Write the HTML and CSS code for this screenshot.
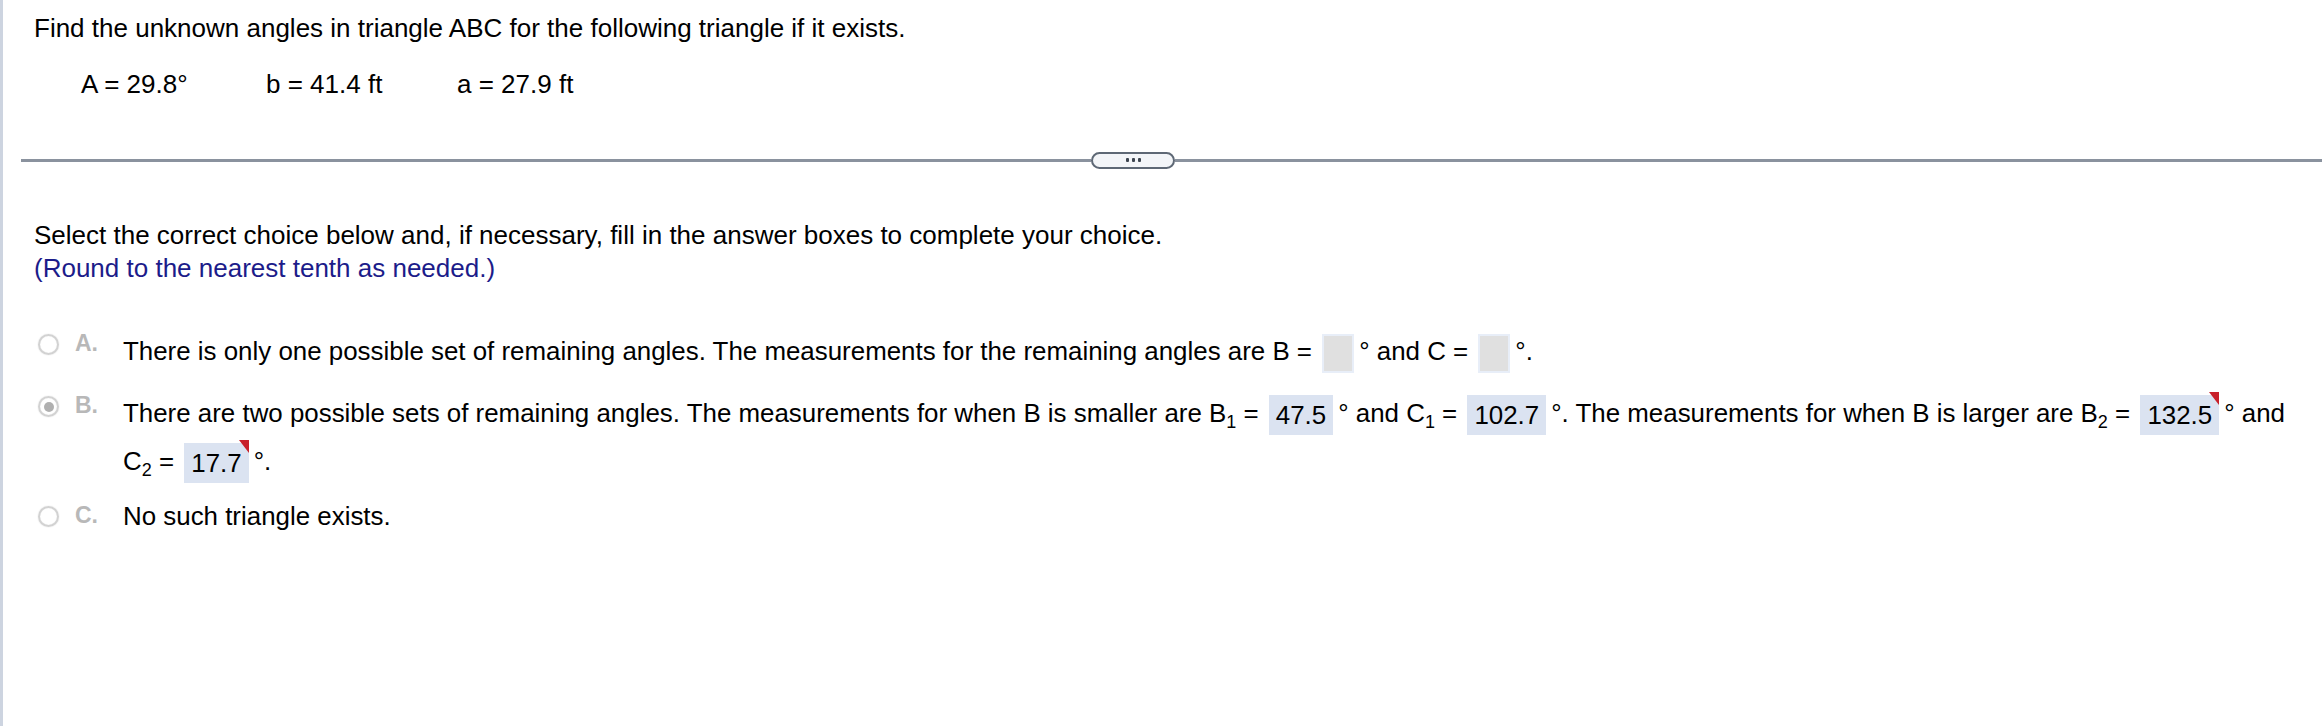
FILE: index.html
```html
<!DOCTYPE html>
<html>
<head>
<meta charset="utf-8">
<link rel="stylesheet" href="styles.css">
</head>
<body>
<div class="page">
  <div class="question">
    <p class="prompt">Find the unknown angles in triangle ABC for the following triangle if it exists.</p>
    <div class="givens">
      <span class="given g1">A = 29.8°</span>
      <span class="given g2">b = 41.4 ft</span>
      <span class="given g3">a = 27.9 ft</span>
    </div>
  </div>
  <div class="divider">
    <span class="line line-left"></span>
    <span class="pill"><span class="dot"></span><span class="dot"></span><span class="dot"></span></span>
    <span class="line"></span>
  </div>
  <div class="answer">
    <p class="instr">Select the correct choice below and, if necessary, fill in the answer boxes to complete your choice.</p>
    <p class="hint">(Round to the nearest tenth as needed.)</p>
    <div class="choices">
      <div class="choice">
        <span class="radio"></span>
        <span class="letter">A.</span>
        <div class="ctext">There is only one possible set of remaining angles. The measurements for the remaining angles are B = <span class="box empty"></span><span class="deg">°</span> and C = <span class="box empty"></span><span class="deg">°</span>.</div>
      </div>
      <div class="choice">
        <span class="radio checked"></span>
        <span class="letter">B.</span>
        <div class="ctext"><span class="seg">There are two possible sets of remaining angles. The measurements for when B is smaller are B<sub>1</sub> =</span> <span class="box">47.5</span><span class="deg">°</span> <span class="seg">and C<sub>1</sub> =</span> <span class="box">102.7</span><span class="deg">°</span><span class="seg">. The measurements for when B is larger are B<sub>2</sub> =</span> <span class="box flag">132.5</span><span class="deg">°</span> <span class="seg">and</span> <span class="seg">C<sub>2</sub> =</span> <span class="box flag">17.7</span><span class="deg">°</span>.</div>
      </div>
      <div class="choice plain">
        <span class="radio"></span>
        <span class="letter">C.</span>
        <div class="ctext">No such triangle exists.</div>
      </div>
    </div>
  </div>
</div>
</body>
</html>
```

FILE: styles.css
```css
html, body {
  margin: 0;
  padding: 0;
  background: #ffffff;
}
body {
  font-family: "Liberation Sans", Arial, sans-serif;
  color: #000000;
  font-size: 26px;
}
.page {
  border-left: 3px solid #cdd4e0;
  min-height: 726px;
  box-sizing: border-box;
}
p { margin: 0; }
.question {
  padding: 13px 0 0 31px;
}
.prompt {
  line-height: 30px;
}
.givens {
  display: flex;
  margin-top: 26px;
  padding-left: 47px;
  line-height: 30px;
}
.g1 { width: 185px; }
.g2 { width: 191px; }
.divider {
  display: flex;
  align-items: center;
  margin: 51px 0 0 18px;
  height: 20px;
}
.line {
  flex: 1;
  height: 3px;
  background: #8a929e;
}
.line-left {
  flex: 0 0 1070px;
}
.pill {
  width: 84px;
  height: 17px;
  border: 2px solid #5e6875;
  border-radius: 9px;
  background: #f3f5f8;
  box-sizing: border-box;
  display: flex;
  align-items: center;
  justify-content: center;
  gap: 3px;
}
.dot {
  width: 3px;
  height: 4px;
  border-radius: 1px;
  background: #3d4550;
}
.answer {
  padding: 49px 0 0 31px;
}
.instr {
  line-height: 33px;
}
.hint {
  line-height: 33px;
  color: #1c1c8a;
}
.choices {
  margin-top: 42px;
  display: flex;
  flex-direction: column;
  gap: 14px;
}
.choice {
  display: flex;
  align-items: flex-start;
  margin-left: 4px;
}
.radio {
  flex: 0 0 auto;
  width: 21px;
  height: 21px;
  border: 2px solid #d2d2d2;
  border-radius: 50%;
  box-sizing: border-box;
  margin-top: 7px;
  box-shadow: 0 0 1.5px #dcdcdc, inset 0 0 1px #e2e2e2;
  position: relative;
}
.radio.checked::after {
  content: "";
  position: absolute;
  left: 3.5px;
  top: 3.5px;
  width: 10px;
  height: 10px;
  border-radius: 50%;
  background: #b0b0b0;
}
.letter {
  flex: 0 0 auto;
  width: 64px;
  box-sizing: border-box;
  padding-left: 16px;
  font-size: 23px;
  font-weight: bold;
  color: #b8b8b8;
  line-height: 32px;
}
.ctext {
  flex: 1;
  font-size: 25.9px;
  line-height: 48px;
  padding-right: 30px;
}
.plain .ctext {
  line-height: 34px;
}
.ctext sub {
  font-size: 18px;
  line-height: 0;
  vertical-align: -6px;
}
.box {
  display: inline-block;
  height: 40px;
  line-height: 40px;
  padding: 0 7px;
  margin: 0 3px 0 -4px;
  vertical-align: middle;
  background: #dbe3f1;
  box-sizing: border-box;
  position: relative;
}
.seg + .box {
  margin-left: 3px;
}
.box.empty {
  width: 32px;
  height: 39px;
  padding: 0;
  margin-left: 3px;
  background: #e0e0e0;
  border: 2px solid #e8eef8;
}
.box.flag::after {
  content: "";
  position: absolute;
  right: 0;
  top: -3px;
  width: 0;
  height: 0;
  border-top: 13px solid #c8202a;
  border-left: 10px solid transparent;
}
.deg {
  margin-left: 2px;
}
```
